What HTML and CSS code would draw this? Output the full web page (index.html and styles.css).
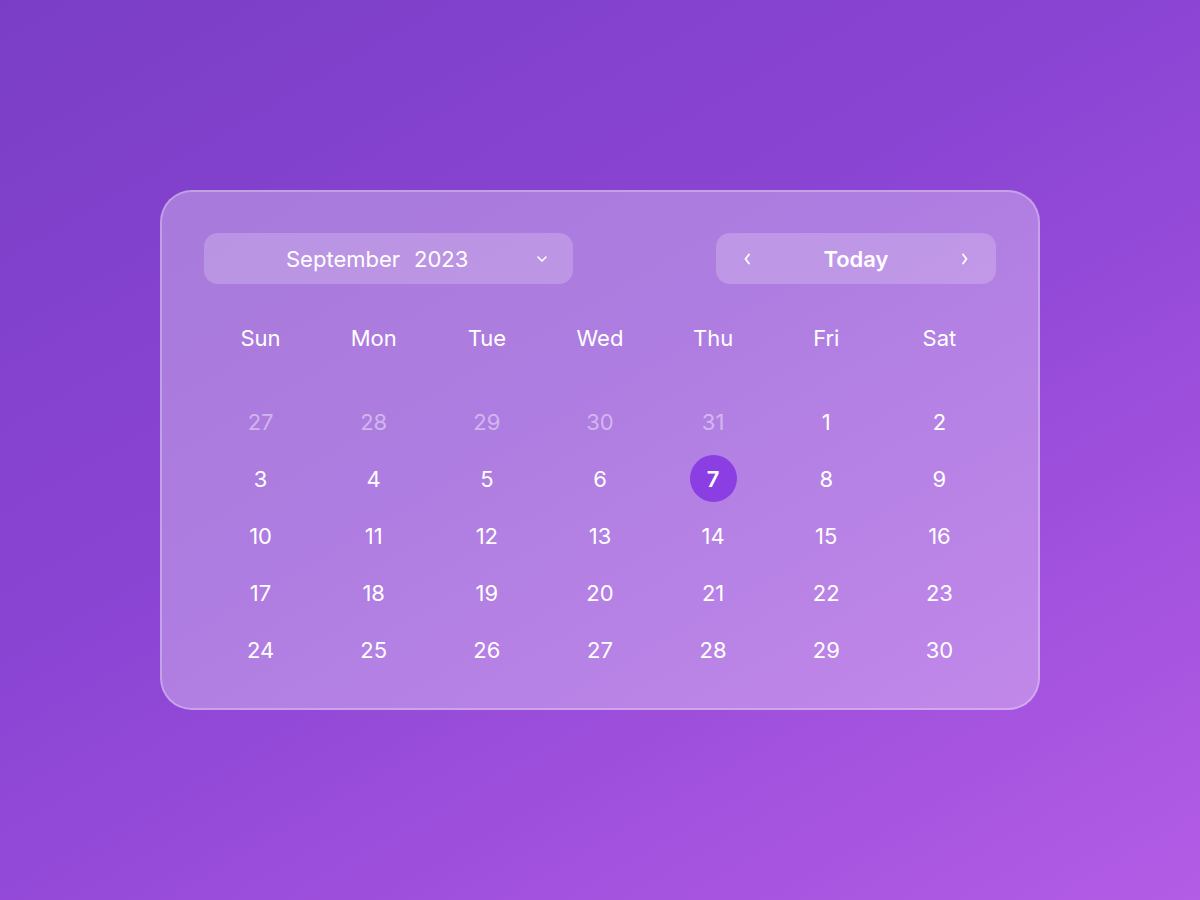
FILE: index.html
```html
<!DOCTYPE html>
<html>
<head>
<meta charset="utf-8">
<link rel="stylesheet" href="styles.css">
</head>
<body>
<div class="stage">
  <div class="card">
    <div class="head">
      <div class="month-pill">
        <span class="month">September</span><span class="year">2023</span>
        <svg class="chev-down" width="12" height="8" viewBox="0 0 12 8"><path d="M2 2 L6 6 L10 2" fill="none" stroke="#fff" stroke-width="1.6" stroke-linecap="round" stroke-linejoin="round"/></svg>
      </div>
      <div class="today-pill">
        <svg class="chev" width="8" height="14" viewBox="0 0 8 14"><path d="M6 2.5 L2.5 7 L6 11.5" fill="none" stroke="#fff" stroke-width="1.8" stroke-linecap="round" stroke-linejoin="round"/></svg>
        <span class="today">Today</span>
        <svg class="chev" width="8" height="14" viewBox="0 0 8 14"><path d="M2 2.5 L5.5 7 L2 11.5" fill="none" stroke="#fff" stroke-width="1.8" stroke-linecap="round" stroke-linejoin="round"/></svg>
      </div>
    </div>
    <div class="weekdays">
      <div>Sun</div><div>Mon</div><div>Tue</div><div>Wed</div><div>Thu</div><div>Fri</div><div>Sat</div>
    </div>
    <div class="days">
      <div class="muted">27</div><div class="muted">28</div><div class="muted">29</div><div class="muted">30</div><div class="muted">31</div><div>1</div><div>2</div>
      <div>3</div><div>4</div><div>5</div><div>6</div><div><span class="sel">7</span></div><div>8</div><div>9</div>
      <div>10</div><div>11</div><div>12</div><div>13</div><div>14</div><div>15</div><div>16</div>
      <div>17</div><div>18</div><div>19</div><div>20</div><div>21</div><div>22</div><div>23</div>
      <div>24</div><div>25</div><div>26</div><div>27</div><div>28</div><div>29</div><div>30</div>
    </div>
  </div>
</div>
</body>
</html>
```

FILE: styles.css
```css
* { box-sizing: border-box; }
html, body { margin: 0; padding: 0; }
body {
  width: 1200px;
  height: 900px;
  overflow: hidden;
  font-family: "Inter", "Lato", sans-serif;
  color: #fff;
  background: linear-gradient(150deg, #7a3ec6 0%, #8c45d4 45%, #b35ce6 100%);
}
.stage {
  padding: 190px 0 0 160px;
}
.card {
  width: 880px;
  height: 520px;
  border-radius: 32px;
  border: 2px solid rgba(255,255,255,0.28);
  background: rgba(255,255,255,0.3);
  padding: 41px 42px 0 42px;
}
.head {
  display: flex;
  justify-content: space-between;
  height: 51px;
}
.month-pill {
  width: 369px;
  height: 51px;
  border-radius: 14px;
  background: rgba(255,255,255,0.2);
  display: flex;
  align-items: center;
  padding-left: 82px;
  padding-top: 1px;
  font-size: 22px;
}
.month { margin-right: 14px; }
.chev-down { margin-left: auto; margin-right: 25px; }
.today-pill {
  width: 280px;
  height: 51px;
  border-radius: 14px;
  background: rgba(255,255,255,0.2);
  display: flex;
  align-items: center;
  justify-content: space-between;
  padding: 1px 27px 0;
}
.today { font-size: 22px; font-weight: 600; }
.weekdays, .days {
  display: grid;
  grid-template-columns: repeat(7, 1fr);
}
.weekdays {
  margin-top: 25px;
  height: 57px;
  font-size: 22px;
}
.weekdays div, .days > div {
  display: flex;
  align-items: center;
  justify-content: center;
}
.days {
  margin-top: 27px;
  grid-auto-rows: 57px;
  font-size: 22px;
}
.muted { color: rgba(255,255,255,0.45); }
.sel {
  width: 47px;
  height: 47px;
  border-radius: 50%;
  background: #8b3fe2;
  display: flex;
  align-items: center;
  justify-content: center;
  font-weight: 600;
}
```
